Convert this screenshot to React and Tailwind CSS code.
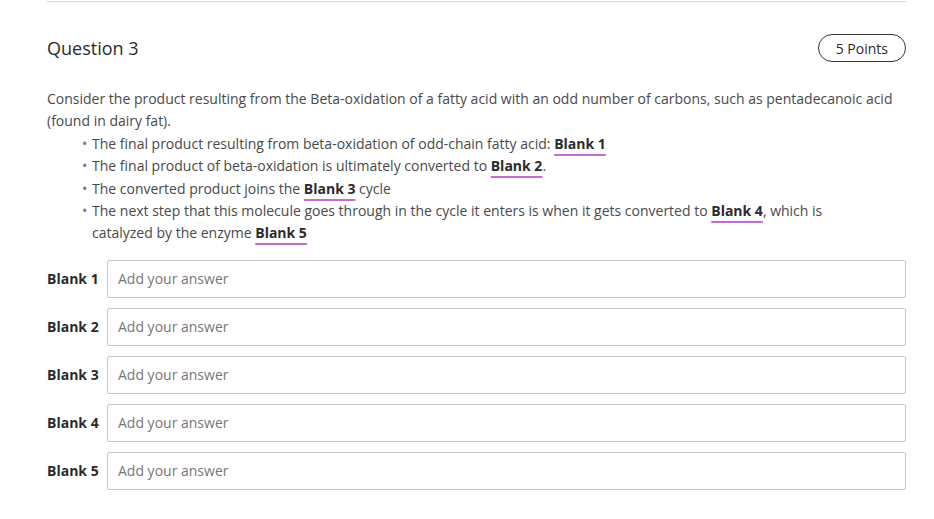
import React from 'react'

const blanks = ['Blank 1', 'Blank 2', 'Blank 3', 'Blank 4', 'Blank 5']

function Blank({ children }) {
    return (
        <span className="font-bold text-[#2b2b2b] underline decoration-2 decoration-[#c46bd6] underline-offset-[5px]">
            {children}
        </span>
    )
}

export default function App() {
    return (
        <div
            className="w-[934px] h-[519px] bg-white text-[#494949] overflow-hidden"
            style={{ fontFamily: '"Open Sans", "Noto Sans", sans-serif' }}
        >
            <div className="ml-[47px] w-[859px]">
                <div className="border-t border-[#d4d4d4] mt-[1px]" />
                <div className="flex items-center justify-between mt-[32px] h-[28px]">
                    <div className="text-[18px] text-[#2b2b2b]">Question 3</div>
                    <div className="h-[28px] px-[17px] rounded-full border border-[#333] text-[14px] text-[#2b2b2b] flex items-center">
                        5 Points
                    </div>
                </div>
                <div className="mt-[26px] text-[14px] leading-[22.4px]">
                    <p>
                        Consider the product resulting from the Beta-oxidation of a fatty acid with an odd
                        number of carbons, such as pentadecanoic acid (found in dairy fat).
                    </p>
                    <ul className="pl-[45px] pr-[80px]">
                        <li className="relative">
                            <span className="absolute -left-[10px] text-[#777]">•</span>
                            The final product resulting from beta-oxidation of odd-chain fatty acid:{' '}
                            <Blank>Blank 1</Blank>
                        </li>
                        <li className="relative">
                            <span className="absolute -left-[10px] text-[#777]">•</span>
                            The final product of beta-oxidation is ultimately converted to{' '}
                            <Blank>Blank 2</Blank>.
                        </li>
                        <li className="relative">
                            <span className="absolute -left-[10px] text-[#777]">•</span>
                            The converted product joins the <Blank>Blank 3</Blank> cycle
                        </li>
                        <li className="relative">
                            <span className="absolute -left-[10px] text-[#777]">•</span>
                            The next step that this molecule goes through in the cycle it enters is when it
                            gets converted to <Blank>Blank 4</Blank>, which is catalyzed by the enzyme{' '}
                            <Blank>Blank 5</Blank>
                        </li>
                    </ul>
                </div>
                <div className="mt-[15px] flex flex-col gap-[10px]">
                    {blanks.map((b) => (
                        <div key={b} className="flex items-center">
                            <div className="w-[60px] text-[14px] font-bold text-[#2b2b2b]">{b}</div>
                            <input
                                placeholder="Add your answer"
                                className="flex-1 h-[38px] border border-[#c8c8c8] rounded-[2px] px-[10px] text-[14px] placeholder:text-[#777] outline-none"
                                style={{ fontFamily: '"Open Sans", sans-serif' }}
                            />
                        </div>
                    ))}
                </div>
            </div>
        </div>
    )
}
